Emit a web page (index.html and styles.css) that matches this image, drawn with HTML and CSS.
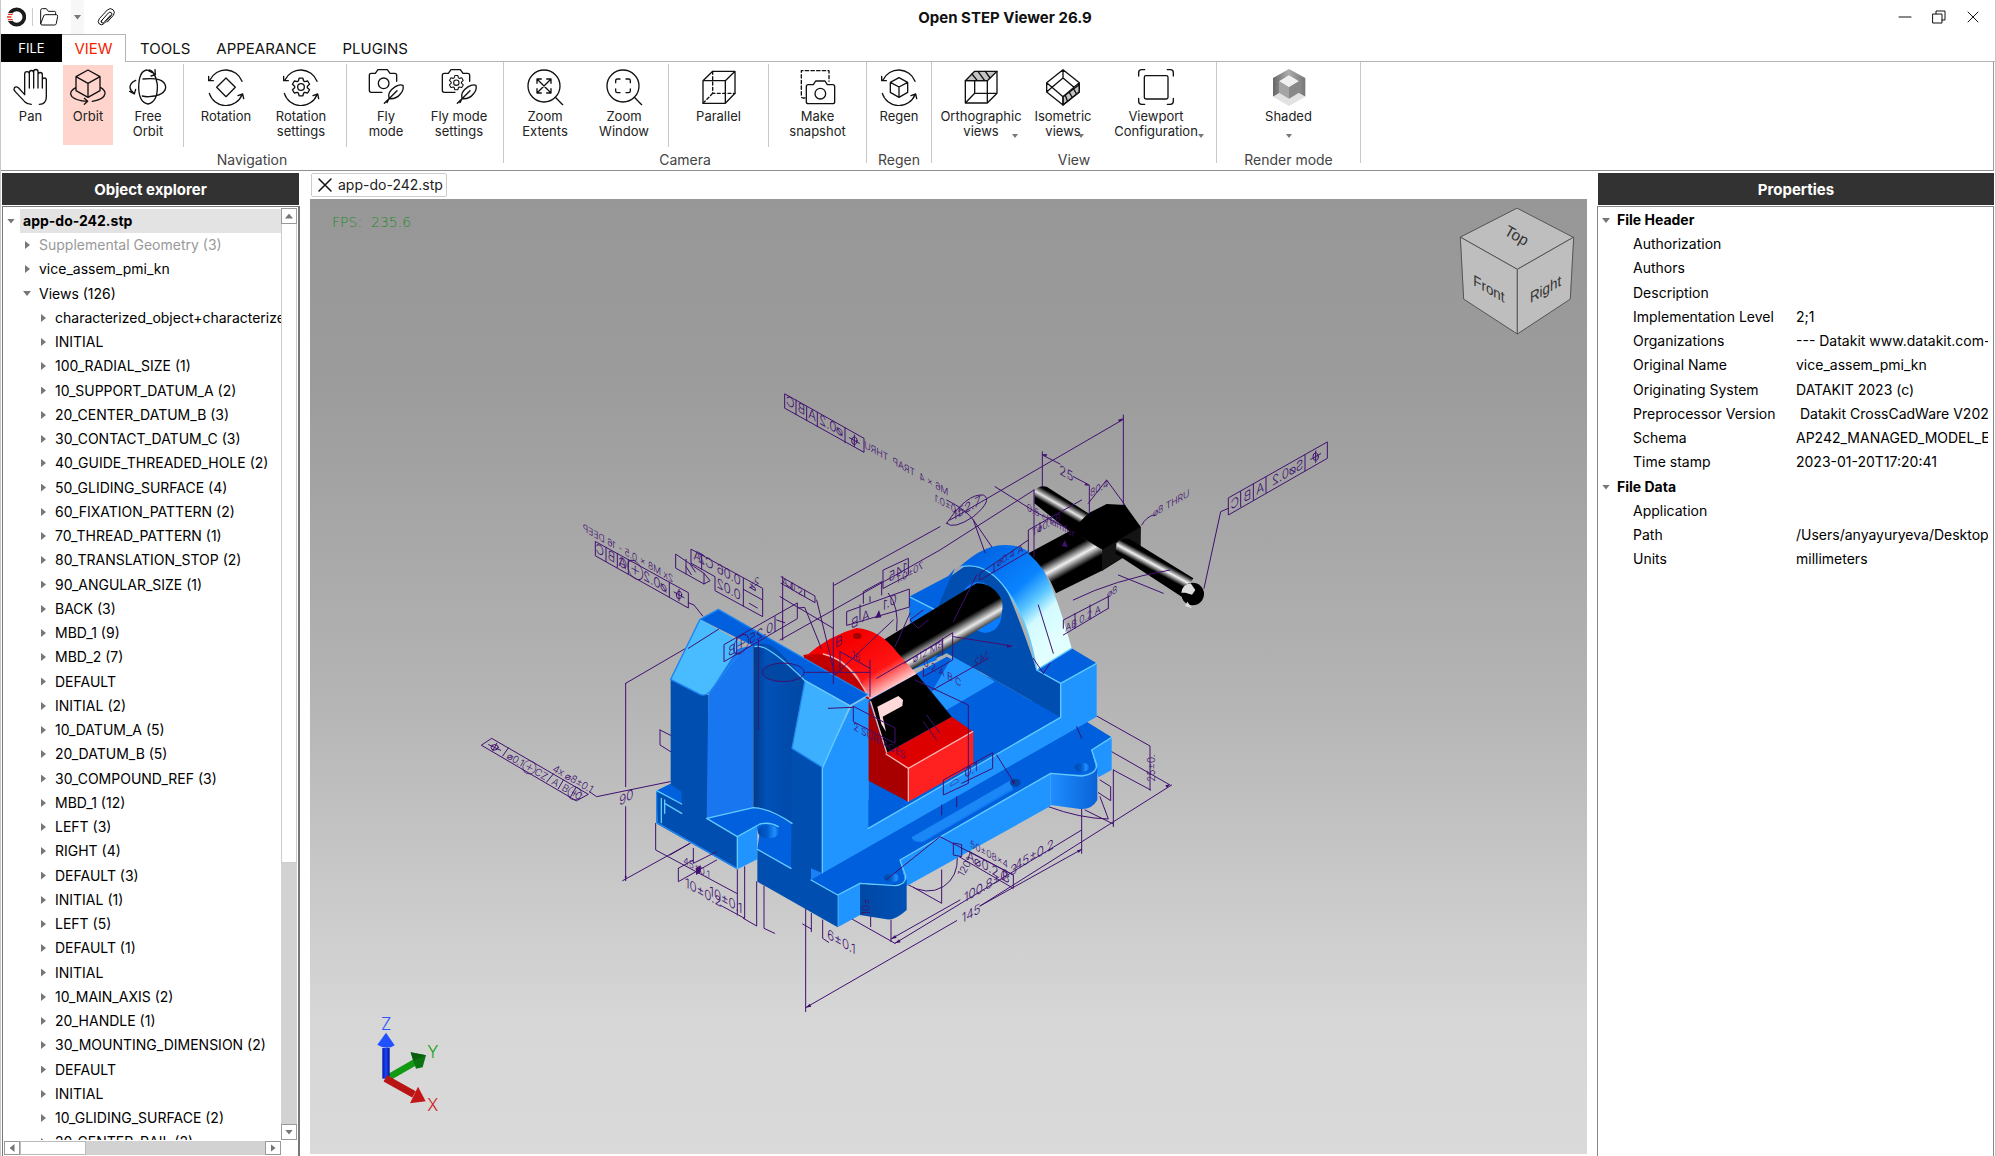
FILE: index.html
```html
<!DOCTYPE html>
<html lang="en">
<head>
<meta charset="utf-8">
<title>Open STEP Viewer 26.9</title>
<link rel="stylesheet" href="styles.css">
</head>
<body>
<svg class="defs" aria-hidden="true">
  <symbol id="arrows" viewBox="0 0 114 114"><path d="M105 40A52 52 0 0 0 9 36M5 25v13h14M7 76A52 52 0 0 0 105 80M93 83l14-5 3 14"/></symbol>
  <symbol id="feather" viewBox="0 0 114 114"><path d="M52 106L66 92Q60 72 85 56 98 48 108 52 111 66 100 78 88 94 66 92M66 92L90 68M66 92L60 104"/></symbol>
  <symbol id="gear" viewBox="-57 -57 114 114"><path d="M-5.6-26.4H5.6L8-18 11-16 20-18 25.7-8.3 19-2V2L25.7 8.3 20 18 11 16 8 18 5.6 26.4H-5.6L-8 18-11 16-20 18-25.7 8.3-19 2V-2L-25.7-8.3-20-18-11-16-8-18Z"/><circle r="10"/></symbol>
</svg>

<header class="titlebar">
  <div class="quick">
    <svg class="logo" viewBox="0 0 60 60" aria-hidden="true"><circle cx="32" cy="30" r="23" fill="none" stroke="#1c1c1e" stroke-width="11"/><path d="M2 22h16M2 30h14M2 38h16" stroke="#fff" stroke-width="8"/><path d="M6 22h14M3 30h13M6 38h14" stroke="#f0341c" stroke-width="4"/></svg>
    <span class="rule"></span>
    <button class="qbtn" aria-label="Open"><svg viewBox="0 0 60 60"><path d="M5 50V10q0-5 5-5h12l6 8h18q4 0 4 4v6M5 50L14 27q1-4 5-4h33q4 0 4 5l-4 21q-1 5-5 5H9q-4 0-4-4"/></svg></button>
    <button class="qdrop" aria-label="Recent files"><span class="down"></span></button>
    <button class="qbtn" aria-label="Attach"><svg viewBox="0 0 60 60"><path d="M15 43L37 18q5-5 9-1t0 9L25 49q-8 8-15 2t0-16L34 9q9-8 17-1t1 17L34 45M17 41q-3 5 1 7 4 1 8-4L44 24"/></svg></button>
  </div>
  <h1>Open STEP Viewer 26.9</h1>
  <div class="winctl">
    <button aria-label="Minimize"><svg viewBox="0 0 14 14"><path d="M1 7h12"/></svg></button>
    <button aria-label="Restore"><svg viewBox="0 0 14 14"><path d="M1 4h9v9H1zM4 4V1h9v9h-3"/></svg></button>
    <button aria-label="Close"><svg viewBox="0 0 14 14"><path d="M2 2l10 10M12 2L2 12"/></svg></button>
  </div>
</header>

<nav class="tabs">
  <button class="file">FILE</button>
  <button class="active">VIEW</button>
  <button>TOOLS</button>
  <button>APPEARANCE</button>
  <button>PLUGINS</button>
</nav>

<section class="ribbon">
  <div class="group">
    <div class="tools">
      <div class="seg seg-pan">
        <button class="tool"><svg viewBox="0 0 114 114"><path d="M38 80L20 60Q12 53 7 60 4 65 9 70L38 101Q46 109 58 109M82 109Q103 108 103 86V36a6 6 0 0 0-12 0V60M91 40V20a6 6 0 0 0-13 0V60M78 20V11a6 6 0 0 0-13 0V60M65 14a6 6 0 0 0-13 0V60M52 18a6 6 0 0 0-14 0V80"/></svg>Pan</button>
        <button class="tool on"><svg viewBox="0 0 114 114"><path d="M57 6L93 26V68L57 88 21 68V26ZM21 26L57 46 93 26M57 46V88M20 59Q-2 71 8 85 20 98 55 100M46 91l10 9-10 9M70 100Q105 95 108 77 109 66 94 58"/></svg>Orbit</button>
        <button class="tool"><svg viewBox="0 0 114 114"><path d="M60 6Q78 8 85 50 87 102 57 108 30 104 29 58 30 8 54 6L70 14M66 24l13-4-1-15M42 33Q108 26 110 58 108 82 60 86 50 87 40 84M20 37Q3 45 3 58 4 68 15 76M2 70l14 8 4-14"/></svg>Free<br>Orbit</button>
      </div>
      <div class="seg seg-rotate">
        <button class="tool"><svg viewBox="0 0 114 114"><use href="#arrows"/><path d="M57 30L85 58 57 86 29 58Z"/></svg>Rotation</button>
        <button class="tool"><svg viewBox="0 0 114 114"><use href="#arrows"/><use href="#gear" width="114" height="114"/></svg>Rotation<br>settings</button>
      </div>
      <div class="seg seg-fly">
        <button class="tool"><svg viewBox="0 0 114 114"><path d="M45 73H13q-6 0-6-6V22q0-6 6-6h12l8-11h28l8 11h14q6 0 6 6v18"/><circle cx="50" cy="46" r="16"/><use href="#feather"/></svg>Fly<br>mode</button>
        <button class="tool"><svg viewBox="0 0 114 114"><path d="M45 73H13q-6 0-6-6V22q0-6 6-6h12l8-11h28l8 11h14q6 0 6 6v18"/><use href="#gear" x="3" y="-2" width="92" height="92"/><use href="#feather"/></svg>Fly mode<br>settings</button>
      </div>
    </div>
    <h2>Navigation</h2>
  </div>
  <div class="group">
    <div class="tools">
      <div class="seg seg-zoom">
        <button class="tool"><svg viewBox="0 0 114 114"><circle cx="54" cy="54" r="48"/><path d="M88 88L110 110M33 33L75 75M75 33L33 75M33 46V33h13M62 33h13v13M75 62v13H62M46 75H33V62"/></svg>Zoom<br>Extents</button>
        <button class="tool"><svg viewBox="0 0 114 114"><circle cx="54" cy="54" r="48"/><path d="M88 88L110 110M32 44v-6q0-5 5-5h8M63 33h8q5 0 5 5v6M76 63v6q0 5-5 5h-8M45 74h-8q-5 0-5-5v-6"/></svg>Zoom<br>Window</button>
      </div>
      <div class="seg seg-parallel">
        <button class="tool"><svg viewBox="0 0 114 114"><path d="M9 38H76V106H9ZM9 38L38 10H105L76 38M105 10V76L76 106"/><path stroke-dasharray="9 7" d="M38 10V76H105M38 76L9 106"/></svg>Parallel</button>
      </div>
      <div class="seg seg-snap">
        <button class="tool"><svg viewBox="0 0 114 114"><path stroke-dasharray="10 7" d="M18 90H12q-5 0-5-5V8H90V40"/><path d="M28 50H43l7-11h28l7 11h16q6 0 6 6V101q0 6-6 6H28q-6 0-6-6V56q0-6 6-6Z"/><circle cx="64" cy="77" r="16"/></svg>Make<br>snapshot</button>
      </div>
    </div>
    <h2>Camera</h2>
  </div>
  <div class="group">
    <div class="tools">
      <div class="seg seg-regen">
        <button class="tool"><svg viewBox="0 0 114 114"><use href="#arrows"/><path d="M57 29L83 43V73L57 88 31 73V43ZM31 43L57 57 83 43M57 57V88"/></svg>Regen</button>
      </div>
    </div>
    <h2>Regen</h2>
  </div>
  <div class="group">
    <div class="tools">
      <div class="seg seg-view">
        <button class="tool"><svg viewBox="0 0 114 114"><path fill="#c4c4c4" d="M10 38L38 10H105L76 38Z"/><path d="M10 38H76V105H10ZM105 10V76L76 105M38 38V76H105M38 76L10 105M30 18L46 38M48 10L68 38M70 10L84 30"/></svg>Orthographic<br>views<span class="down"></span></button>
        <button class="tool"><svg viewBox="0 0 114 114"><path fill="#c4c4c4" d="M57 86L106 50V72L57 111Z"/><path d="M57 5L106 44V72L57 111 8 72V44ZM57 30L90 58 57 86 24 58ZM57 5V30M57 86V111M8 44L24 58 8 72M106 44L90 58M64 82l6 16M76 73l8 14M89 63l8 14"/></svg>Isometric<br>views<span class="down"></span></button>
        <button class="tool"><svg viewBox="0 0 114 114"><rect x="22" y="23" width="71" height="70" rx="5"/><path d="M5 24V14q0-9 9-9h9M91 5h9q9 0 9 9v10M109 91v9q0 9-9 9h-9M23 109h-9q-9 0-9-9v-9"/></svg>Viewport<br>Configuration<span class="down"></span></button>
      </div>
    </div>
    <h2>View</h2>
  </div>
  <div class="group">
    <div class="tools">
      <div class="seg seg-shade">
        <button class="tool"><svg viewBox="0 0 114 114" class="solid"><defs><linearGradient id="sl"><stop offset="0" stop-color="#666"/><stop offset="1" stop-color="#b0b0b0"/></linearGradient><linearGradient id="sr"><stop offset="0" stop-color="#aaa"/><stop offset="1" stop-color="#777"/></linearGradient></defs><path fill="url(#sl)" d="M57 3V59L9 86V30Z"/><path fill="url(#sr)" d="M57 3L106 30V86L57 59Z"/><path fill="#e2e2e2" d="M9 86L57 59 106 86 57 114Z"/><path fill="#f0f0f0" d="M57 22L87 40 57 58 27 40Z"/><path fill="#a4a4a4" d="M27 40L57 58V92L27 74Z"/><path fill="#888" d="M87 40L57 58V92L87 74Z"/></svg>Shaded<span class="down mid"></span></button>
      </div>
    </div>
    <h2>Render mode</h2>
  </div>
</section>

<main class="work">
  <aside class="explorer">
    <h2 class="bar">Object explorer</h2>
    <div class="treebox">
      <ul class="tree">
        <li class="open root"><b>app-do-242.stp</b></li>
        <li class="l1 dim">Supplemental Geometry (3)</li>
        <li class="l1">vice_assem_pmi_kn</li>
        <li class="l1 open">Views (126)</li>
        <li>characterized_object+characterize</li>
        <li>INITIAL</li>
        <li>100_RADIAL_SIZE (1)</li>
        <li>10_SUPPORT_DATUM_A (2)</li>
        <li>20_CENTER_DATUM_B (3)</li>
        <li>30_CONTACT_DATUM_C (3)</li>
        <li>40_GUIDE_THREADED_HOLE (2)</li>
        <li>50_GLIDING_SURFACE (4)</li>
        <li>60_FIXATION_PATTERN (2)</li>
        <li>70_THREAD_PATTERN (1)</li>
        <li>80_TRANSLATION_STOP (2)</li>
        <li>90_ANGULAR_SIZE (1)</li>
        <li>BACK (3)</li>
        <li>MBD_1 (9)</li>
        <li>MBD_2 (7)</li>
        <li>DEFAULT</li>
        <li>INITIAL (2)</li>
        <li>10_DATUM_A (5)</li>
        <li>20_DATUM_B (5)</li>
        <li>30_COMPOUND_REF (3)</li>
        <li>MBD_1 (12)</li>
        <li>LEFT (3)</li>
        <li>RIGHT (4)</li>
        <li>DEFAULT (3)</li>
        <li>INITIAL (1)</li>
        <li>LEFT (5)</li>
        <li>DEFAULT (1)</li>
        <li>INITIAL</li>
        <li>10_MAIN_AXIS (2)</li>
        <li>20_HANDLE (1)</li>
        <li>30_MOUNTING_DIMENSION (2)</li>
        <li>DEFAULT</li>
        <li>INITIAL</li>
        <li>10_GLIDING_SURFACE (2)</li>
        <li>20_CENTER_RAIL (2)</li>
      </ul>
      <div class="vscroll"><button class="arrow" aria-label="Scroll up"><span class="up"></span></button><div class="track"><div class="thumb"></div></div><button class="arrow" aria-label="Scroll down"><span class="down"></span></button></div>
      <div class="hscroll"><button class="arrow" aria-label="Scroll left"><span class="left"></span></button><div class="track"><div class="thumb"></div></div><button class="arrow" aria-label="Scroll right"><span class="right"></span></button></div>
    </div>
  </aside>

  <section class="center">
    <div class="doctabs"><button class="doctab"><svg viewBox="0 0 14 14" aria-hidden="true"><path d="M1 1l12 12M13 1L1 13"/></svg>app-do-242.stp</button></div>
    <div class="view3d">
      <p class="fps">FPS:&nbsp; 235.6</p>
      <svg class="scene" viewBox="-1410 -1203 3831 2865" role="img" aria-label="Vice assembly">
        <defs>
          <linearGradient id="screw" gradientUnits="userSpaceOnUse" x1="540" y1="-15" x2="612" y2="110"><stop offset="0" stop-color="#000"/><stop offset=".46" stop-color="#000"/><stop offset=".68" stop-color="#e8e8e8"/><stop offset=".86" stop-color="#111"/><stop offset="1" stop-color="#000"/></linearGradient>
          <linearGradient id="nut" gradientUnits="userSpaceOnUse" x1="830" y1="-215" x2="898" y2="-92"><stop offset="0" stop-color="#000"/><stop offset=".52" stop-color="#000"/><stop offset=".74" stop-color="#f0f0f0"/><stop offset=".96" stop-color="#000"/></linearGradient>
          <linearGradient id="rodA" gradientUnits="userSpaceOnUse" x1="860" y1="-305" x2="832" y2="-256"><stop offset=".15" stop-color="#000"/><stop offset=".5" stop-color="#e4e4e4"/><stop offset=".8" stop-color="#000"/></linearGradient>
          <linearGradient id="rodB" gradientUnits="userSpaceOnUse" x1="1140" y1="-130" x2="1112" y2="-78"><stop offset=".2" stop-color="#000"/><stop offset=".5" stop-color="#f4f4f4"/><stop offset=".8" stop-color="#000"/></linearGradient>
          <linearGradient id="arch" gradientUnits="userSpaceOnUse" x1="620" y1="-160" x2="850" y2="100"><stop offset="0" stop-color="#0064e4"/><stop offset=".45" stop-color="#0a84ff"/><stop offset=".62" stop-color="#5cc6ff"/><stop offset=".76" stop-color="#d2fbff"/><stop offset="1" stop-color="#e2ffff"/></linearGradient>
          <linearGradient id="redtop" gradientUnits="userSpaceOnUse" x1="240" y1="100" x2="345" y2="275"><stop offset="0" stop-color="#f50000"/><stop offset=".6" stop-color="#ff1414"/><stop offset="1" stop-color="#fff0f0"/></linearGradient>
          <linearGradient id="ear"><stop offset="0" stop-color="#0048a4"/><stop offset=".45" stop-color="#005cce"/><stop offset=".8" stop-color="#1f8fff"/><stop offset="1" stop-color="#0a62d8"/></linearGradient>
          <linearGradient id="bore"><stop offset="0" stop-color="#003a88"/><stop offset=".25" stop-color="#0051b8"/><stop offset="1" stop-color="#0047a2"/></linearGradient>
          <linearGradient id="zax"><stop offset="0" stop-color="#0016b4"/><stop offset=".5" stop-color="#1d48f0"/><stop offset="1" stop-color="#0012a0"/></linearGradient>
        </defs>

        <!-- dimension lines behind the body -->
        <g class="ann">
          <path d="M-463 250L-185 88M-463 250V560M-463 620V842M-472 842L-270 730M77 925V1235M77 1223L530 962M600 918L1175 555M333 960V1025M345 1030L905 690M333 1017L540 900M905 625V760M905 748L600 918M1000 510V680M950 348L1110 438V570M1000 510L1112 570M995 455L1170 555M915 630L1000 672M805 620Q900 655 985 657L960 590M485 810V910L400 862M485 710L700 825V865L520 760M380 852Q440 890 490 860 535 830 532 770M-373 670V750L-130 880M-128 808V945M-106 800V955L-180 915M-70 845V978L-110 955M-48 858V985l32 15M-270 730L-330 765M94 940V995M68 972l26 15M128 960V1015l18 12M128 820L280 905M168 930L345 1030M272 870V980"/>
        </g>

        <g id="base">
          <path fill="#005fdc" d="M-68 748L173 885 240 850 345 857 378 848 360 780 812 520 905 528 950 510 935 450 995 412 920 365 760 300 100 700Z"/>
          <path fill="#2095ff" d="M360 780L812 520V618L380 858ZM935 450L995 412V510L955 532ZM173 885L240 850V945L173 982Z"/>
          <path fill="#0f7cf2" d="M395 712L690 542 700 570 430 726Q398 730 395 712Z"/>
          <path fill="#1b86f6" d="M395 712L690 542 697 565 430 722Q400 726 395 712Z"/>
          <path fill="url(#ear)" d="M240 850Q345 865 380 838V930Q345 962 320 958L240 945ZM812 518Q905 535 952 503V600Q935 630 900 627L812 615Z"/>
          <ellipse cx="335" cy="833" rx="23" ry="13" fill="url(#ear)"/><ellipse cx="906" cy="502" rx="22" ry="14" fill="url(#ear)"/><ellipse cx="706" cy="548" rx="16" ry="12" fill="#0048a4"/>
          <path class="edge" d="M173 885L240 850 345 857Q382 852 376 825L360 780 812 520 905 528Q950 522 950 495L935 450 995 412M173 885V980"/>
        </g>

        <g id="bed">
          <path fill="#005fdc" d="M265 685L842 352 645 240 500 170 265 300Z"/>
          <path fill="#2095ff" d="M455 275L500 330 645 245 520 165Z"/>
          <path fill="#2095ff" d="M127 500L215 318 265 290V685L842 352V250L950 190V350L127 820Z"/>
          <path fill="#004fb0" d="M387-10L470 30 510-70 555-102Q620-110 680-30 720 60 770 210L842 250V352L645 240 500 160 395 210Z"/>
          <path fill="#0062e0" d="M387-10L505-72 525-95 470 30Z"/>
          <path fill="#0a73ee" d="M387-10L470 30V180L395 210Z"/>
          <path fill="#004fb0" d="M470 30L512-70 580-100 660-40V150L480 150Z"/>
          <ellipse cx="605" cy="22" rx="58" ry="78" fill="#0a7cff" transform="rotate(-20 605 22)"/>
          <path fill="url(#arch)" d="M510-70Q600-170 680-165 760-165 800-70 835 0 875 145L770 210Q745 60 680-30 620-115 540-100Z"/>
          <path fill="#0060dd" d="M770 210L875 145 950 190 842 250Z"/>
          <path class="edge" d="M265 685L842 352M842 352V250L950 190M842 250L770 210Q745 60 680-30 620-115 545-100M770 210L875 145M387-10L470 32"/>
        </g>

        <g id="spindle">
          <path fill="url(#nut)" d="M745-140L875-210 965-150 970-90 828-20Q800-90 745-140Z"/>
          <path fill="#000" d="M870-210L925-260 980-288 1035-285 1082-220 1080-160 966-88 968-150Z"/>
          <path fill="url(#rodA)" d="M763-325Q775-345 800-340L925-260 870-205 763-290Z"/>
          <path fill="#141414" d="M966-150L1082-220V-160L966-88Z"/>
          <path fill="url(#rodB)" d="M1010-170Q1025-190 1050-182L1240-65 1205-10 1005-140Z"/>
          <circle cx="1238" cy="-18" r="34" fill="#000"/><path fill="#ddd" d="M1204-22Q1208-48 1232-50L1246-30 1236-16 1216-22ZM1222 5L1215 18 1236 25Z"/>
          <path fill="url(#screw)" d="M310 120L590-50Q640-50 665 0 672 30 660 50L395 210Z"/>
        </g>

        <g id="red-jaw">
          <path fill="#c00000" d="M70 165L130 155 190 190 245 245 270 300 80 200Z"/>
          <path fill="url(#redtop)" d="M75 170Q150 105 230 84 300 90 350 155L410 222 270 298Q245 225 180 180 120 150 75 170Z"/>
          <path class="glint" d="M130 162Q210 180 265 290"/>
          <path fill="#a80000" d="M266 300L320 462 385 505V605L266 542Z"/>
          <path fill="#dd0000" d="M318 460L515 350 580 395 385 505Z"/>
          <path fill="#ff2020" d="M385 505L580 395V495L385 605Z"/>
          <path fill="#000" d="M270 300L410 222 515 350 320 458Z"/>
          <path fill="#ffdada" d="M292 320L355 288 369 300 367 318 308 350 318 395 304 372Z"/>
          <path class="glint" d="M318 462L385 505 578 395M385 505V603M272 305L320 458"/>
          <ellipse cx="232" cy="108" rx="13" ry="9" fill="#a40000"/>
        </g>

        <g id="fixed-jaw">
          <path fill="#004fb0" d="M-328 238L-235 283-215 285V655L-128 710V808L-368 672-370 572-328 552Z"/>
          <path fill="#0060dd" d="M-370 572L-330 552-295 575V612Z"/>
          <path fill="#1877f0" d="M-215 285L-140 150-80 135V625L-220 655Z"/>
          <path fill="url(#bore)" d="M-80 135L-30 120 75 240 36 445V670L-30 632-80 625Z"/>
          <ellipse cx="10" cy="217" rx="63" ry="28" fill="#0048a4"/>
          <path fill="#0060dd" d="M-240 58L-185 28 265 285 210 315 75 240Q-10 140-30 135-65 125-75 140L-120 118Z"/>
          <path fill="#48bcff" d="M-328 238L-240 58-115 128-210 275Q-225 290-240 283Z"/>
          <path fill="#0060dd" d="M-220 655L-80 623Q-30 625 36 670V805L-68 748-60 690-128 710Z"/>
          <path fill="#2095ff" d="M-128 710L-68 675V778L-128 808Z"/>
          <ellipse cx="-35" cy="695" rx="32" ry="20" fill="url(#ear)"/>
          <path fill="#3cb0ff" d="M75 242L210 318 127 505 38 445Z"/>
          <path fill="#004fb0" d="M36 445L127 502V820L93 805V840L173 885V982L-68 845V748L33 805Z"/>
          <path fill="#1a80f4" d="M93 805L127 820 93 840Z"/>
          <path class="edge dimmer" d="M-328 238L-240 283Q-225 290-210 275L-115 150M-328 238L-240 58-185 28 265 285M75 242L36 445 127 502M-370 572V668L-128 806"/>
          <path class="edge" d="M265 285L210 318 127 505V818M75 242L210 318M-75 140Q-45 125 75 242M-370 572L-295 612M-220 655L-80 623Q-30 625 36 670M-220 655L-128 710-60 672Q-30 665-5 680M-128 710V806M-68 748L33 805M93 840L173 885M-356 595V668M-346 600V640M-346 610L-295 640"/>
        </g>

        <!-- product and manufacturing annotations -->
        <g class="ann">
          <path d="M15-618L252-485V-443L15-575ZM48-600V-556M80-580V-538M112-563V-520M195-517V-472M500-300Q560-270 580-240M-553-175L-275-22V24L-553-132ZM-522-158V-115M-488-140V-98M-455-122V-78M-332-52V-8M-275 8L-258 15-232 48M-266-152L-52-35V50L-195-28V-70L-266-110ZM-235-136V-92M-110-65V18M-110-32L-52 0M-312-137L-228-80V-48L-312-95ZM-282-122V-78M-228-80l18 22-18 10M3-70L105-12V8L3-50M36-52V-32M74-30V-10M-168 135V185L52 56V10ZM-130 115V160M-15 50V95M56 24L74 22 124 145M110 0L165 225M-275 145L-185 88M8-70V120M160-52V250M162-44L480-220M510-240L1030-542M1030-555V-285M0 120L480-150 762-330M762-330V-130M787-445V-340M787-435L840-408M880-370L928-345V-260M978-358L925-290M980-360L1035-285M500-230Q560-320 610-315 640-300 580-250 520-210 500-230ZM1345-305V-255L1642-425V-473ZM1382-325V-280M1420-348V-300M1458-368V-322M1575-435V-388M1345-275L1322-265 1272-35M1085-225Q1100-250 1120-255M580-240L615-142M580-240L635-160M310-90L385-125V-75L310-35ZM200 75V35L388-33V20ZM240 60V15M270-10V5M250 10V-25L305-55V-15M325-20Q358 20 350 92M850 105L985 25M850 85V60L985-10V25M885 40V85M930 15V58M600-80L745-180V-145L600-60ZM642-108V-84M590-75L520 65M745-180V-210L905-300M780-232V-205M645-340L765-265 860-215M345 140L390 40M430 30L390 60 415 85 445 60M520 110L695 138M290 235L480 125M372 190L518 98V180L430 230V205M488 115V165M458 270L625 175M405 240L565 315V550L490 585V540L638 458V505L545 550M650 465L702 548M220 320V365L345 430V385ZM145 325L218 322M78 217H270M270 180V290M180 155L270 205M180 155V215M-65 120V390M485 615V645M530 590V620M320 838L480 710 700 825M-895 435L-865 415-575 583-610 602ZM-832 468L-815 444M-700 546L-680 522M-665 566L-650 540M-628 590L-612 562M-572 575L-550 590-330 545M-360 390V435L-328 455M-360 390L-328 406M-260 745V790L-190 755M-305 805V845L-190 780M-305 805L-260 780M520 730V765L545 770V735ZM960 540L992 560V602L955 578M430 365L470 420M440 345L480 400M790 220L760 175M790 220L810 190M775 15L820 160M905 415L890 380M1015-75L1150 -20M880 0Q1000-60 1170-90M340 60L165 225M0 -10L160 85"/>
          <ellipse cx="10" cy="217" rx="63" ry="28"/>
          <ellipse cx="223" cy="-478" rx="8" ry="11"/><path d="M223-495v34M208-487l30 17"/>
          <ellipse cx="-303" cy="-15" rx="8" ry="11"/><path d="M-303-32v34M-318-24l30 17"/>
          <ellipse cx="1607" cy="-430" rx="8" ry="11"/><path d="M1607-447v34M1592-422l30-17"/>
          <ellipse cx="-856" cy="442" rx="11" ry="8"/><path d="M-874 434l36 17M-862 454l12-24"/>
          <path d="M-90-38l16 10q2-16-16-10M-92 10l24 14M20-45l12 8M-282-100l16 24M-270-108l16 24M-10 60l24 8"/>
          <path class="fill" d="M1030-545l-16 4 5 8zM788-438l14 1-5 8zM927-343l-14-1 5-8zM-463 842l-3-14h6zM77 1223l12-12 5 9zM345 1030l12-12 5 9zM1170 553l-14 3 5 8zM905 748l-14 3 5 8zM333 1017l12-12 5 9zM695 140l-14-7v10zM845-162l10-18 8 22zM285 55l12-25 7 22zM-252 805l14-10v22l-14 8zM702 555l-8-13h12z"/>
          <g class="labels">
            <text transform="matrix(-.87 -.5 0 1 190 -488)">⌀0.2<tspan x="94">A</tspan><tspan x="131">B</tspan><tspan x="168">C</tspan></text>
            <text class="sm" transform="matrix(-.87 -.5 0 1 505 -312)">M6 x 4&#8194;TRAP&#8194;THRU</text>
            <text class="sm" transform="matrix(-.87 -.5 0 1 545 -250)">1.0±0.1</text>
            <text transform="matrix(-.87 -.5 0 1 -338 -20)">⌀0.2⊕C<tspan x="142">A</tspan><tspan x="180">B</tspan><tspan x="218">C</tspan></text>
            <text class="sm" transform="matrix(-.87 -.5 0 1 -320 -52)">2x M8 x 0.5 - 16 DEEP</text>
            <text transform="matrix(-.87 -.5 0 1 -118 -42)">0.06 CZ<tspan x="136">A</tspan></text>
            <text transform="matrix(-.87 -.5 0 1 -118 2)">0.02</text>
            <text transform="matrix(-.87 .5 0 1 -20 92)">0.25⊕<tspan x="130">B</tspan></text>
            <text transform="matrix(.87 .5 0 1 838 -378)">25</text>
            <text transform="matrix(.87 -.5 0 1 518 -238)">152.7</text>
            <text transform="matrix(-.87 .5 0 1 1570 -396)">S⌀0.2<tspan x="136">A</tspan><tspan x="180">B</tspan><tspan x="222">C</tspan></text>
            <text class="sm" transform="matrix(.87 -.5 0 1 1118 -248)">⌀8 THRU</text>
            <text transform="matrix(-.87 .5 0 1 382 -86)">145</text>
            <text class="sm" transform="matrix(-.87 .5 0 1 430 -95)">70±0.1</text>
            <text transform="matrix(-.87 .5 0 1 350 8)">0.1<tspan x="94">A</tspan><tspan x="132">B</tspan></text>
            <text class="sm" transform="matrix(.87 -.5 0 1 930 -310)">80.4</text>
            <text class="sm" transform="matrix(.87 .5 0 1 740 -270)">0.5 chamfer</text>
            <text class="sm" transform="matrix(.87 -.5 0 1 755 -190)">T⌀0.1 B</text>
            <text class="sm" transform="matrix(.87 -.5 0 1 650 -100)">⌀0.4 A</text>
            <text class="sm" transform="matrix(.87 -.5 0 1 856 96)">AB 0.2 A</text>
            <text class="sm" transform="matrix(.87 -.5 0 1 980 -5)">⌀8</text>
            <text class="sm" transform="matrix(-.87 .5 0 1 625 175)">142</text>
            <text class="sm" transform="matrix(.87 .5 0 1 430 195)">0.2 A B C</text>
            <text class="sm" transform="matrix(.87 -.5 0 1 400 190)">⌀12 M8</text>
            <text class="sm" transform="matrix(.87 .5 -.5 .87 -822 474)">⌀0.1⊕CZ<tspan x="154">A</tspan><tspan x="190">B⊕</tspan><tspan x="234">C</tspan></text>
            <text class="sm" transform="matrix(.87 .5 -.5 .87 -685 512)">4x ⌀8±0.1</text>
            <text transform="matrix(.87 -.5 0 1 -482 618)">90</text>
            <text transform="matrix(.87 .5 0 1 -285 860)">10±0.2</text>
            <text transform="matrix(.87 .5 0 1 -212 885)">10±0.1</text>
            <text class="sm" transform="matrix(.87 .5 0 1 -290 790)">45±0.1</text>
            <text transform="matrix(.87 .5 0 1 142 1015)">6±0.1</text>
            <text transform="matrix(.87 -.5 0 1 545 970)">145</text>
            <text transform="matrix(.87 -.5 0 1 552 908)">100.8±0.3</text>
            <text transform="matrix(.87 -.5 0 1 705 812)">45±0.2</text>
            <text class="sm" transform="matrix(.87 .5 0 1 570 740)">50±08x4</text>
            <text transform="matrix(.87 .5 0 1 560 778)">A⌀0.2 B</text>
            <text class="sm" transform="matrix(.5 -.87 .87 .5 550 832)">120°</text>
            <text class="sm" transform="matrix(.87 .5 0 1 220 388)">2 SURFACES</text>
            <text transform="matrix(.87 -.5 0 1 510 560)">⌓&#8194;0.1</text>
            <text class="sm" transform="matrix(0 -1 1 0 270 945)">10±</text>
            <text class="sm" transform="matrix(0 -1 1 0 1125 545)">25±0.</text>
            <text class="sm" transform="matrix(-.87 .5 0 1 -62 -50)">2x</text>
            <text class="sm" transform="matrix(.87 .5 0 1 5 -48)">A 0.2</text>
            <text class="sm" transform="matrix(.87 .5 0 1 215 172)">16</text>
            <text transform="matrix(.87 -.5 0 1 165 145)">B</text>
          </g>
        </g>

        <!-- orientation cube -->
        <g class="cube">
          <path d="M2212-1175L2380-1088 2212-992 2042-1088Z"/>
          <path d="M2042-1088L2212-992V-798L2052-902Z"/>
          <path d="M2380-1088L2212-992V-798L2370-902Z"/>
          <text transform="matrix(.87 .5 -.5 .87 2170 -1098)">Top</text>
          <text transform="matrix(.87 .5 0 1 2080 -945)">Front</text>
          <text transform="matrix(.87 -.5 0 1 2250 -890)">Right</text>
        </g>

        <!-- axis triad -->
        <g class="triad" transform="translate(10 0)">
          <path d="M-1180 1430L-1090 1378" stroke="#129a12" stroke-width="20"/><path fill="#0b7410" d="M-1118 1357L-1072 1366-1082 1402-1102 1406Z"/><path fill="#0a5f0e" d="M-1072 1366L-1118 1357-1110 1382Z"/>
          <path fill="url(#zax)" d="M-1203 1344H-1181V1436H-1203Z"/><path fill="#2150ff" d="M-1192 1298L-1166 1336Q-1190 1352-1218 1334Z"/>
          <path d="M-1194 1435L-1108 1483" stroke="#b81414" stroke-width="22"/><path fill="#c41616" d="M-1096 1460L-1073 1504-1120 1510Z"/>
          <text x="-1207" y="1291" fill="#2a55ff">Z</text><text x="-1068" y="1373" fill="#10a010">Y</text><text x="-1068" y="1533" fill="#cc2222">X</text>
        </g>
      </svg>
    </div>
  </section>

  <aside class="props">
    <h2 class="bar">Properties</h2>
    <div class="propbox">
      <table>
        <colgroup><col class="c1"><col></colgroup>
        <tbody>
          <tr class="head"><th colspan="2">File Header</th></tr>
          <tr><th>Authorization</th><td></td></tr>
          <tr><th>Authors</th><td></td></tr>
          <tr><th>Description</th><td></td></tr>
          <tr><th>Implementation Level</th><td>2;1</td></tr>
          <tr><th>Organizations</th><td>--- Datakit www.datakit.com-</td></tr>
          <tr><th>Original Name</th><td>vice_assem_pmi_kn</td></tr>
          <tr><th>Originating System</th><td>DATAKIT 2023 (c)</td></tr>
          <tr><th>Preprocessor Version</th><td>&nbsp;Datakit CrossCadWare V2023</td></tr>
          <tr><th>Schema</th><td>AP242_MANAGED_MODEL_E</td></tr>
          <tr><th>Time stamp</th><td>2023-01-20T17:20:41</td></tr>
          <tr class="head"><th colspan="2">File Data</th></tr>
          <tr><th>Application</th><td></td></tr>
          <tr><th>Path</th><td>/Users/anyayuryeva/Desktop/s</td></tr>
          <tr><th>Units</th><td>millimeters</td></tr>
        </tbody>
      </table>
    </div>
  </aside>
</main>
</body>
</html>
```
FILE: styles.css
```css
* { box-sizing: border-box; }
body {
  margin: 0;
  height: 100vh;
  display: flex;
  flex-direction: column;
  overflow: hidden;
  background: #fff;
  border: solid #c8c8c8;
  border-width: 0 1px;
  font-family: Inter, "Liberation Sans", sans-serif;
  font-size: 14px;
  color: #111;
}
button { border: 0; padding: 0; margin: 0; background: none; font: inherit; color: inherit; }
h1, h2, p, ul { margin: 0; padding: 0; font-weight: normal; }
.defs { position: absolute; width: 0; height: 0; }
svg { fill: none; stroke: #111; stroke-width: 4; stroke-linecap: round; stroke-linejoin: round; }

/* small triangles */
.down, .up, .left, .right { display: block; background: #777; }
.down { width: 8px; height: 5px; clip-path: polygon(0 0, 100% 0, 50% 100%); }
.up { width: 8px; height: 5px; clip-path: polygon(50% 0, 100% 100%, 0 100%); }
.left { width: 5px; height: 8px; clip-path: polygon(100% 0, 100% 100%, 0 50%); }
.right { width: 5px; height: 8px; clip-path: polygon(0 0, 100% 50%, 0 100%); }

/* title bar */
.titlebar { display: grid; grid-template-columns: 1fr auto 1fr; align-items: center; height: 34px; flex: none; padding: 0 15px 0 5px; }
.titlebar h1 { font-size: 15px; font-weight: 700; padding-left: 24px; }
.quick { display: flex; align-items: center; height: 100%; }
.logo { width: 20px; height: 20px; stroke-linecap: butt; }
.rule { width: 1px; height: 18px; background: #ccc; margin: 0 6px; }
.qbtn { width: 20px; height: 20px; }
.qbtn svg { display: block; width: 20px; height: 20px; stroke-width: 3; }
.qdrop { width: 13px; height: 100%; margin: 0 12px; background: #f7f7f7; display: grid; place-items: center; }
.winctl { display: flex; justify-content: flex-end; gap: 20px; }
.winctl svg { display: block; width: 14px; height: 14px; stroke-width: 1; }

/* ribbon tabs */
.tabs { display: flex; height: 28px; flex: none; font-size: 15px; box-shadow: inset 0 -1px #b4b4b4; }
.tabs button { padding: 0 12px 0 14px; }
.tabs .file { width: 61px; padding: 0; background: #000; color: #fff; font-size: 13px; }
.tabs .active { width: 64px; padding: 0; color: #f52200; background: #fff; border: solid #b4b4b4; border-width: 1px 1px 0 0; }

/* ribbon */
.ribbon { display: flex; flex: none; height: 109px; border-bottom: 1px solid #8f8f8f; border-right: 1px solid #999; margin-right: 1px; }
.group { display: flex; flex-direction: column; margin-bottom: 7px; border-right: 1px solid #c8c8c8; }
.group h2 { font-size: 14px; line-height: 20px; text-align: center; color: #444; margin-top: 3px; }
.tools { display: flex; padding-top: 2px; }
.seg { display: grid; height: 83px; border-right: 1px solid #c8c8c8; padding-top: 1px; }
.seg:last-child { border-right: 0; }
.seg-pan { grid-template-columns: 59px 56px 64px; padding-right: 3px; }
.seg-rotate { grid-template-columns: 84px 66px; padding-right: 12px; }
.seg-fly { grid-template-columns: 78px 68px; padding-right: 10px; }
.seg-zoom { grid-template-columns: 82px 76px; padding-right: 6px; }
.seg-parallel { grid-template-columns: 99px; }
.seg-snap { grid-template-columns: 97px; }
.seg-regen { grid-template-columns: 64px; }
.seg-view { grid-template-columns: 98px 66px 120px; }
.seg-shade { grid-template-columns: 143px; }
.tool { position: relative; height: 80px; padding-top: 3px; font-size: 13px; line-height: 15px; color: #222; display: flex; flex-direction: column; align-items: center; justify-content: flex-start; }
.tool { display: block; height: auto; align-self: start; min-height: 0; }
.tool svg { display: block; width: 38px; height: 38px; margin: 0 auto 3px; }
.tool .solid { stroke: none; }
.tool.on { background: #ffd4cc; margin: 0 3px; padding-bottom: 21px; }
.tool .down { position: absolute; right: 12px; top: 69px; width: 6px; height: 4px; }
.tool .mid { right: 68px; }

/* work area */
.work { display: flex; flex: 1; min-height: 0; padding: 2px 1px 0; gap: 10px; }
.bar { height: 32px; line-height: 33px; background: #323232; color: #fff; font-size: 15px; font-weight: 700; text-align: center; }
.explorer { width: 298px; flex: none; display: flex; flex-direction: column; }
.explorer .bar { margin-right: 1px; }
.treebox { flex: 1; min-height: 0; margin-top: 1px; border: solid #777; border-width: 1px 2px 0 1px; display: grid; grid-template: 1fr 14px / 1fr 16px; padding: 1px; gap: 1px 0; }
.tree { list-style: none; overflow: hidden; min-height: 0; min-width: 0; white-space: nowrap; color: #000; padding-top: 1px; }
.tree li { height: 24px; line-height: 26px; display: flex; align-items: center; padding-left: 37px; }
.tree li:nth-child(4n) { height: 25px; }
.tree li::before { content: ""; flex: none; width: 5px; height: 8px; margin-right: 9px; background: #777; clip-path: polygon(0 0, 100% 50%, 0 100%); }
.tree .open::before { width: 8px; height: 5px; margin-right: 8px; clip-path: polygon(0 0, 100% 0, 50% 100%); }
.tree .l1 { padding-left: 21px; }
.tree .l1.open { padding-left: 19px; }
.tree .root { padding-left: 3px; background: linear-gradient(#e3e3e3, #e3e3e3) 16px 0 no-repeat; }
.tree .dim { color: #999; }
.vscroll, .hscroll { display: flex; }
.vscroll { flex-direction: column; }
.arrow { flex: none; width: 16px; height: 16px; display: grid; place-items: center; background: #fff; border: 1px solid #999; }
.hscroll .arrow { height: 14px; }
.track { flex: 1; background: #d2d2d2; }
.thumb { background: #fff; }
.vscroll .thumb { height: 71%; border: solid #ccc; border-width: 0 1px 1px; }
.hscroll .thumb { width: 27%; height: 100%; border: 1px solid #bbb; }

.center { flex: 1; min-width: 0; display: flex; flex-direction: column; margin-bottom: 2px; }
.doctabs { height: 26px; flex: none; }
.doctab { display: flex; align-items: center; gap: 6px; height: 24px; margin-left: 1px; padding: 0 3px 0 6px; border: 1px solid #ccc; border-radius: 2px; font-size: 14px; line-height: 20px; color: #222; }
.doctab svg { width: 14px; height: 14px; stroke-width: 1.5; }
.view3d { position: relative; flex: 1; min-height: 0; background: linear-gradient(#979797, #9c9c9c 20%, #b4b4b4 52%, #d6d6d6 85%, #dadada); }
.scene { display: block; width: 100%; height: 100%; stroke: none; }
.fps { position: absolute; left: 22px; top: 14px; font: 300 14px/18px "DejaVu Sans", sans-serif; color: #258a25; }
.scene text { font-family: "Liberation Sans", sans-serif; }
.ann { fill: none; stroke: #401070; stroke-width: 3; }
.ann .fill { fill: #401070; stroke: none; }
.scene .labels text { font-family: Inter, "DejaVu Sans", sans-serif; }
.labels { fill: #401070; stroke: none; font-size: 40px; font-weight: 300; }
.labels .sm { font-size: 30px; }
.edge { fill: none; stroke: #62caff; stroke-width: 4; }
.dimmer { stroke: #1e86f0; }
.glint { fill: none; stroke: #ffb0b0; stroke-width: 4; }
.cube { fill: #bebebe; stroke: #555; stroke-width: 3; }
.cube text { fill: #333; stroke: none; font-size: 46px; }
.triad { stroke-linecap: butt; }
.scene .triad text { font-size: 50px; font-family: Inter, sans-serif; font-weight: 300; }

/* properties */
.props { width: 397px; flex: none; display: flex; flex-direction: column; }
.props .bar { margin-left: 1px; }
.propbox { flex: 1; min-height: 0; margin-top: 1px; border: solid #888; border-width: 1px 1px 0; padding: 1px 5px 0 0; overflow: hidden; }
.propbox table { width: 100%; table-layout: fixed; border-collapse: collapse; color: #000; }
.c1 { width: 198px; }
.propbox tr { height: 24px; }
.propbox tr:nth-child(4n) { height: 25px; }
.propbox th, .propbox td { padding: 0; text-align: left; font-weight: normal; white-space: nowrap; overflow: hidden; line-height: 24px; }
.propbox th { padding-left: 35px; }
.propbox .head th { font-weight: 700; padding-left: 4px; }
.head th::before { content: ""; display: inline-block; width: 8px; height: 5px; margin: 0 7px 2px 0; background: #777; clip-path: polygon(0 0, 100% 0, 50% 100%); }
```
